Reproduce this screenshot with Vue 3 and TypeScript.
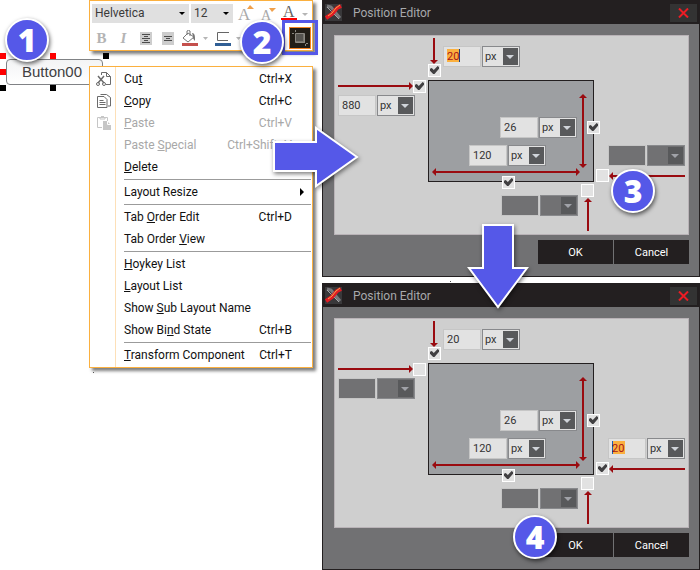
<script setup lang="ts">
import { reactive } from 'vue'

interface Side {
  key: string
  label: string
  value: string
  on: boolean
  mark?: 'end' | 'start'
}

interface Editor {
  id: string
  tall: boolean
  sides: Side[]
}

interface MenuEntry {
  text: [string, string, string]
  shortcut?: string
  disabled?: boolean
  submenu?: boolean
  icon?: 'cut' | 'copy' | 'paste'
}

const menuGroups: MenuEntry[][] = [
  [
    { text: ['Cu', 't', ''], shortcut: 'Ctrl+X', icon: 'cut' },
    { text: ['', 'C', 'opy'], shortcut: 'Ctrl+C', icon: 'copy' },
    { text: ['', 'P', 'aste'], shortcut: 'Ctrl+V', icon: 'paste', disabled: true },
    { text: ['Paste ', 'S', 'pecial'], shortcut: 'Ctrl+Shift+V', disabled: true },
    { text: ['', 'D', 'elete'] },
  ],
  [{ text: ['Layout Resize', '', ''], submenu: true }],
  [
    { text: ['Tab ', 'O', 'rder Edit'], shortcut: 'Ctrl+D' },
    { text: ['Tab Order ', 'V', 'iew'] },
  ],
  [
    { text: ['', 'H', 'oykey List'] },
    { text: ['', 'L', 'ayout List'] },
    { text: ['Show ', 'S', 'ub Layout Name'] },
    { text: ['Show Bi', 'n', 'd State'], shortcut: 'Ctrl+B' },
  ],
  [{ text: ['', 'T', 'ransform Component'], shortcut: 'Ctrl+T' }],
]

const editors = reactive<Editor[]>([
  {
    id: 'before',
    tall: false,
    sides: [
      { key: 'top', label: 'Top', value: '20', on: true, mark: 'end' },
      { key: 'left', label: 'Left', value: '880', on: true },
      { key: 'height', label: 'Height', value: '26', on: true },
      { key: 'width', label: 'Width', value: '120', on: true },
      { key: 'right', label: 'Right', value: '', on: false },
      { key: 'bottom', label: 'Bottom', value: '', on: false },
    ],
  },
  {
    id: 'after',
    tall: true,
    sides: [
      { key: 'top', label: 'Top', value: '20', on: true },
      { key: 'left', label: 'Left', value: '', on: false },
      { key: 'height', label: 'Height', value: '26', on: true },
      { key: 'width', label: 'Width', value: '120', on: true },
      { key: 'right', label: 'Right', value: '20', on: true, mark: 'start' },
      { key: 'bottom', label: 'Bottom', value: '', on: false },
    ],
  },
])
</script>

<template>
  <main class="page">
    <section class="designer">
      <div class="selection">
        <button class="sample" type="button">Button00</button>
        <i class="handle red nw"></i>
        <i class="handle red n"></i>
        <i class="handle ne"></i>
        <i class="handle red w"></i>
        <i class="handle sw"></i>
        <i class="handle s"></i>
      </div>

      <div class="toolbar">
        <div class="tool-row">
          <div class="combos">
            <span class="combo family">
              <select aria-label="Font family"><option>Helvetica</option></select>
            </span>
            <span class="combo size">
              <select aria-label="Font size"><option>12</option></select>
            </span>
          </div>
          <button class="tool" type="button" aria-label="Grow font">
            <svg width="18" height="20" viewBox="0 0 18 20">
              <text x="1" y="17" class="glyph soft" font-size="17">A</text>
              <path d="M10 6 13 2l4 4z" fill="#f0a04b" />
            </svg>
          </button>
          <button class="tool" type="button" aria-label="Shrink font">
            <svg width="18" height="20" viewBox="0 0 18 20">
              <text x="2" y="17" class="glyph soft" font-size="14">A</text>
              <path d="M10 5h7l-4 4z" fill="#f0a04b" />
            </svg>
          </button>
          <button class="tool" type="button" aria-label="Font color">
            <svg width="28" height="20" viewBox="0 0 28 20">
              <text x="2" y="14" class="glyph" font-size="16">A</text>
              <path d="M0 15h16v2H0z" fill="#fe0000" />
              <path d="M21 10h6l-3 3z" fill="#b5b5b5" />
            </svg>
          </button>
        </div>
        <div class="tool-row second">
          <button class="tool bold" type="button">B</button>
          <button class="tool italic" type="button">I</button>
          <button class="tool" type="button" aria-label="Align center">
            <svg width="12" height="13" viewBox="0 0 12 13">
              <path d="M0 0h12v13H0z" fill="#cdcdcd" />
              <path d="M2 2.500h8M4 4.500h4M2 6.500h8M4 8.500h4M2 10.500h8" stroke="#4c4c4c" />
            </svg>
          </button>
          <button class="tool" type="button" aria-label="Align middle">
            <svg width="12" height="13" viewBox="0 0 12 13">
              <path d="M0 0h12v13H0z" fill="#cdcdcd" />
              <path d="M2 4.500h8M4 6.500h4M2 8.500h8" stroke="#4c4c4c" />
            </svg>
          </button>
          <button class="tool" type="button" aria-label="Fill color">
            <svg width="28" height="17" viewBox="0 0 28 17" fill="none">
              <path d="M7 3 2 8l5 4 6-5zM6 5V1q1.500-1.500 3 0v5" stroke="#777" />
              <path d="M11 3q3 0 3 5v3q-3-3-2-5z" fill="#777" />
              <path d="M1 13h16v3H1z" fill="#c4504d" />
              <path d="M22 7h5l-2.500 3z" fill="#b5b5b5" />
            </svg>
          </button>
          <button class="tool" type="button" aria-label="Border">
            <svg width="28" height="17" viewBox="0 0 28 17" fill="none">
              <path d="M15 2.500H3.500v8H14" stroke="#666" />
              <path d="M1 13h16v3H1z" fill="#305f95" />
              <path d="M22 7h5l-2.500 3z" fill="#b5b5b5" />
            </svg>
          </button>
        </div>
        <button class="position-tool" type="button" aria-label="Position editor">
          <svg width="20" height="20" viewBox="0 0 20 20" fill="none">
            <path d="M6 6h9v9H6z" fill="#77756f" />
            <path d="M6 6h7v7H6z" fill="#55534f" />
            <path d="M5.500 5.500h9v9h-9zM2 5.500h2M5.500 2v2M15.500 16v2M16 15.500h2" stroke="#8b8882" />
          </svg>
        </button>
      </div>

      <nav class="menu">
        <ul v-for="(group, g) in menuGroups" :key="g" class="group">
          <li v-for="entry in group" :key="entry.text.join('')">
            <button class="entry" type="button" :disabled="entry.disabled">
              <span class="icon">
                <svg v-if="entry.icon === 'cut'" width="16" height="16" viewBox="0 0 16 16" fill="none" stroke="#6b6b6b">
                  <path d="M5.500 4V1.500h5l4 4v8H10M10.500 1.500v4h4" />
                  <path d="m2 5 6 7M8 5l-6 7" stroke-width="1.500" />
                  <circle cx="2" cy="13" r="1.500" />
                  <circle cx="8" cy="13" r="1.500" />
                </svg>
                <svg v-if="entry.icon === 'copy'" width="16" height="16" viewBox="0 0 16 16" fill="none" stroke="#6b6b6b">
                  <path d="M1.500 3.500H8l3 3v8H1.500zM4.500 1.500h6l4 3v8.500H12M3.500 7.500h4M3.500 9.500h6M3.500 11.500h6" />
                </svg>
                <svg v-if="entry.icon === 'paste'" width="16" height="16" viewBox="0 0 16 16" fill="none" stroke="#c6c6c6">
                  <path d="M6 12.500H1.500v-10h10V6M4 2.500V4h5V2.500M5 1.500h3" />
                  <path d="M7 6h4l4 4v5H7z" fill="#c6c6c6" stroke="none" />
                  <path d="M11.500 6v3.500H15" stroke="#fff" />
                </svg>
              </span>
              <span class="name">{{ entry.text[0] }}<u v-if="entry.text[1]">{{ entry.text[1] }}</u>{{ entry.text[2] }}</span>
              <span class="shortcut">{{ entry.shortcut }}</span>
              <span class="sub"><i v-if="entry.submenu"></i></span>
            </button>
          </li>
        </ul>
      </nav>
    </section>

    <section class="dialogs">
      <form v-for="editor in editors" :key="editor.id" class="dialog" @submit.prevent>
        <header class="title">
          <svg class="logo" width="17" height="17" viewBox="0 0 17 17" fill="none">
            <path d="M0 0h17v17H0z" fill="#39383a" />
            <path d="m2 2 4 1 4 5 5 6" stroke="#77787b" stroke-width="3" />
            <path d="m2 3 12 12" stroke="#a4a5a8" />
            <path d="m16 2-4 2-5 6-6 4" stroke="#e21a22" stroke-width="4" />
            <path d="m15 1-4 3-4 5-4 3" stroke="#f5a64a" />
          </svg>
          <h2>Position Editor</h2>
          <button class="close" type="button" aria-label="Close">
            <svg width="11" height="10" viewBox="0 0 11 10">
              <path d="m1 .5 9 9m0-9-9 9" stroke="#ed1c24" stroke-width="2" />
            </svg>
          </button>
        </header>
        <div class="canvas" :class="{ tall: editor.tall }">
          <div class="box"></div>
          <i class="arrow v down at-top"></i>
          <i class="arrow h east at-left"></i>
          <i class="arrow v up down at-height"></i>
          <i class="arrow h west east at-width"></i>
          <i class="arrow h west at-right"></i>
          <i class="arrow v up at-bottom"></i>
          <template v-for="side in editor.sides" :key="side.key">
            <input v-model="side.on" class="check" :class="side.key" type="checkbox" :aria-label="`Use ${side.label}`">
            <div class="field" :class="side.key">
              <input
                v-model="side.value"
                class="value"
                :class="side.mark && `mark-${side.mark}`"
                type="text"
                :aria-label="side.label"
                :disabled="!side.on"
              >
              <span class="unit" :class="{ off: !side.on }">
                <select :aria-label="`${side.label} unit`" :disabled="!side.on">
                  <option>{{ side.on ? 'px' : '' }}</option>
                </select>
              </span>
            </div>
          </template>
        </div>
        <footer class="actions">
          <button type="submit">OK</button>
          <button type="button">Cancel</button>
        </footer>
      </form>
    </section>

    <i class="speck menu-corner"></i>
    <i class="speck between"></i>
    <i class="ring"></i>
    <svg class="flow right" width="96" height="70" viewBox="0 0 96 70">
      <path d="M7 20h42V6l41 29-41 29V49H7z" />
    </svg>
    <svg class="flow down" width="70" height="92" viewBox="0 0 70 92">
      <path d="M20 5h30v43h14L35 87 6 48h14z" />
    </svg>
    <b class="badge one">1</b>
    <b class="badge two">2</b>
    <b class="badge three">3</b>
    <b class="badge four">4</b>
  </main>
</template>

<style>
body {
  background: #fff;
}
</style>

<style scoped>
* {
  box-sizing: border-box;
}

.page {
  position: relative;
  display: grid;
  grid-template-columns: 322px minmax(378px, 1fr);
  overflow: hidden;
  font-family: Roboto, "Noto Sans", sans-serif;
  font-size: 12px;
}

button,
input,
select {
  margin: 0;
  font: inherit;
}

button {
  padding: 0;
  border: 0;
  background: none;
}

svg {
  display: block;
}

/* Designer side */

.designer {
  position: relative;
  padding: 0 9px 0 89px;
}

.selection {
  position: absolute;
  left: 0;
  top: 53px;
  width: 109px;
  height: 38px;
  padding: 6px;
}

.sample {
  width: 97px;
  height: 26px;
  padding-right: 5px;
  border: 1px solid #808285;
  border-radius: 4px;
  background: linear-gradient(#f3f4f5, #fff);
  color: #414042;
  font: 15px/24px "Liberation Sans", sans-serif;
}

.handle {
  position: absolute;
  width: 6px;
  height: 6px;
  background: #000;
}

.handle.red { background: #fe0000; }
.nw { left: 0; top: 0; }
.n { left: 50px; top: 0; }
.ne { right: 0; top: 0; }
.w { left: 0; top: 16px; }
.sw { left: 0; bottom: 0; }
.s { left: 50px; bottom: 0; }

.toolbar,
.menu {
  position: relative;
  width: 224px;
  border: 1px solid #fbb03f;
  background: #fff;
  box-shadow: 3px 3px 3px rgba(0, 0, 0, 0.5);
}

.toolbar {
  padding: 2px 2px 0;
}

.tool-row {
  display: flex;
  align-items: center;
  gap: 4px;
  height: 20px;
}

.tool-row.second {
  gap: 5px;
  height: 27px;
  padding: 3px 0 0 1px;
}

.combos {
  display: flex;
  gap: 2px;
}

.combo {
  position: relative;
  height: 19px;
  background: #e0e0e0;
}

.combo::after {
  content: "";
  position: absolute;
  right: 4px;
  top: 8px;
  border: 3px solid transparent;
  border-top-color: #000;
  border-bottom: 0;
  pointer-events: none;
}

.family { width: 97px; }
.size { width: 42px; }

.combo select {
  width: 100%;
  height: 19px;
  padding: 0 3px;
  border: 0;
  background: none;
  color: #3a3a3a;
  appearance: none;
  font-size: 12px;
}

.tool {
  display: grid;
  place-items: center;
  flex: none;
  min-width: 17px;
}

.glyph {
  font-family: "Liberation Serif", serif;
  fill: #666;
}

.glyph.soft {
  fill: #a9a9a9;
}

.bold,
.italic {
  color: #b4b4b4;
  font: bold 15px "Liberation Serif", serif;
}

.italic {
  font-style: italic;
}

.position-tool {
  position: absolute;
  right: 1px;
  top: 26px;
  width: 22px;
  height: 22px;
  border: 1px solid #f58220;
  background: #211d17;
}

.menu {
  margin-top: 15px;
  padding: 1px 0;
  background: linear-gradient(#fde0b8, #fde0b8) 25px 0 / 1px 100% no-repeat #fff;
}

.group {
  margin: 0;
  padding: 0;
  list-style: none;
}

.group + .group::before {
  content: "";
  display: block;
  height: 1px;
  margin: 1px 1px 1px 34px;
  background: #9b9b9b;
}

.entry {
  display: grid;
  grid-template-columns: 34px auto 1fr 20px;
  align-items: center;
  width: 100%;
  height: 22px;
  color: #111;
  line-height: 22px;
  text-align: left;
  white-space: nowrap;
}

.entry:disabled {
  color: #a8a8a8;
}

.icon {
  padding-left: 6px;
}

.shortcut {
  text-align: right;
}

.sub {
  justify-self: center;
}

.sub i {
  display: block;
  border: 4px solid transparent;
  border-left-color: #000;
  border-right: 0;
}

/* Dialogs */

.dialogs {
  display: grid;
  gap: 6px;
  align-content: start;
}

.dialog {
  border: 1px solid #231f20;
  background: #717173;
}

.title {
  display: flex;
  align-items: center;
  height: 23px;
  padding: 0 2px;
  background: #231f20;
}

.title h2 {
  flex: 1;
  margin: 0 0 0 11px;
  color: #a7a9ac;
  font-size: 12px;
  font-weight: 400;
}

.close {
  display: grid;
  place-items: center;
  width: 27px;
  height: 18px;
  background: #333;
}

.canvas {
  position: relative;
  min-height: 200px;
  margin: 11px 10px 5px 11px;
  border: 0;
  background: #cfcfcf;
  box-shadow: inset 0 0 0 1px #b9b3b7;
}

.canvas.tall {
  min-height: 210px;
}

.box {
  position: absolute;
  inset: 45px 95px 53px 94px;
  border: 1px solid #231f20;
  background: #9d9fa2;
}

.arrow {
  position: absolute;
  background: linear-gradient(#9a0b10, #9a0b10) center no-repeat;
}

.arrow::before,
.arrow::after {
  position: absolute;
  border: 4px solid transparent;
}

.arrow.h { height: 8px; background-size: calc(100% - 4px) 2px; }
.arrow.v { width: 8px; background-size: 2px calc(100% - 4px); }
.west::before { content: ""; left: 0; top: 0; border-left: 0; border-right-color: #9a0b10; }
.east::after { content: ""; right: 0; top: 0; border-right: 0; border-left-color: #9a0b10; }
.up::before { content: ""; left: 0; top: 0; border-top: 0; border-bottom-color: #9a0b10; }
.down::after { content: ""; left: 0; bottom: 0; border-bottom: 0; border-top-color: #9a0b10; }

.at-top { left: 96px; top: 1px; height: 28px; }
.at-left { left: 2px; top: 47px; width: 77px; }
.at-height { right: 102px; top: 59px; bottom: 67px; }
.at-width { left: 98px; right: 109px; bottom: 59px; }
.at-right { right: 2px; bottom: 55px; width: 78px; }
.at-bottom { right: 97px; bottom: 2px; height: 35px; }

.check {
  position: absolute;
  width: 13px;
  height: 13px;
  border: 1px solid #fff;
  background: #e2e2e2;
  appearance: none;
}

.check:checked::before {
  content: "";
  display: block;
  width: 9px;
  height: 8px;
  margin: 1px;
  background: #414042;
  clip-path: polygon(0 35%, 20% 25%, 42% 50%, 85% 0, 100% 12%, 100% 35%, 50% 100%, 35% 100%, 0 60%);
}

.check.top { left: 94px; top: 29px; }
.check.left { left: 79px; top: 45px; }
.check.height { right: 89px; bottom: 101px; }
.check.width { right: 174px; bottom: 46px; }
.check.right { right: 80px; bottom: 53px; }
.check.bottom { right: 95px; bottom: 38px; }

.field {
  position: absolute;
  display: flex;
  gap: 1px;
}

.field.top { left: 109px; top: 11px; }
.field.left { left: 4px; top: 60px; }
.field.height { right: 112px; bottom: 97px; }
.field.width { right: 143px; bottom: 69px; }
.field.right { right: 4px; bottom: 69px; }
.field.bottom { right: 111px; bottom: 19px; }

.value {
  width: 38px;
  height: 21px;
  padding: 0 3px;
  border: 1px solid #c6c6c6;
  border-radius: 0;
  background: #e2e2e2;
  color: #333;
  font-size: 11px;
}

.value:disabled {
  background: #717173;
}

.mark-end {
  background:
    linear-gradient(#1f3f77, #1f3f77) 15px 2px / 1px 13px no-repeat,
    linear-gradient(#fbb03f, #fbb03f) 3px 2px / 12px 13px no-repeat #e2e2e2;
  color: #a8141a;
}

.mark-start {
  background:
    linear-gradient(#1c5cb8, #1c5cb8) 3px 2px / 1px 13px no-repeat,
    linear-gradient(#fbb03f, #fbb03f) 3px 2px / 13px 13px no-repeat #e2e2e2;
  color: #a8141a;
}

.unit {
  position: relative;
  width: 38px;
  height: 21px;
  border: 1px solid #88898c;
  background: #e2e2e2;
}

.unit.off {
  background: #717173;
}

.unit::before {
  content: "";
  position: absolute;
  top: 1px;
  right: 1px;
  width: 15px;
  height: 17px;
  background: #58595b;
}

.unit::after {
  content: "";
  position: absolute;
  top: 8px;
  right: 5px;
  border: 4px solid transparent;
  border-top-color: #d0d4da;
  border-bottom: 0;
  pointer-events: none;
}

.unit.off::after {
  border-top-color: #a0a2a8;
}

.unit select {
  width: 100%;
  height: 19px;
  padding: 0 2px;
  border: 0;
  background: none;
  color: #333;
  appearance: none;
  font-size: 11px;
}

.actions {
  display: flex;
  justify-content: flex-end;
  gap: 1px;
  padding: 0 10px 12px;
}

.actions button {
  width: 75px;
  height: 24px;
  background: #231f20;
  color: #fff;
  font-size: 11px;
}

/* Walkthrough annotations */

.ring,
.flow,
.speck,
.badge {
  position: absolute;
  pointer-events: none;
}

.speck {
  width: 1px;
  height: 1px;
  background: #555;
}

.menu-corner { left: 93px; top: 372px; }
.between { left: 450px; top: 281px; }

.ring {
  left: 282px;
  top: 20px;
  width: 36px;
  height: 35px;
  border: 3px solid #5558e8;
}

.flow {
  fill: #5558e8;
  stroke: #fff;
  stroke-width: 2;
  filter: drop-shadow(1px 2px 2px rgba(0, 0, 0, 0.5));
}

.flow.right { left: 267px; top: 122px; }
.flow.down { left: 463px; top: 220px; }

.badge {
  display: grid;
  place-items: center;
  width: 44px;
  height: 44px;
  border: 2px solid #fff;
  border-radius: 50%;
  background: #5558e8;
  box-shadow: 1px 2px 4px rgba(0, 0, 0, 0.6);
  color: #fff;
  font: 800 32px/32px "Open Sans", sans-serif;
}

.one { left: 5px; top: 18px; }
.two { left: 240px; top: 20px; }
.three { left: 611px; top: 169px; }
.four { left: 513px; top: 515px; }
</style>
